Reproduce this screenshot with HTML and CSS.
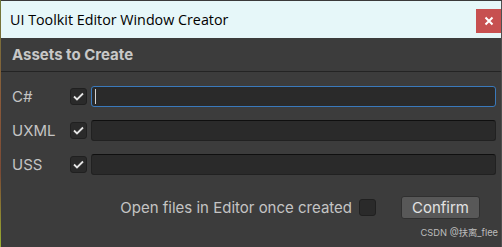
FILE: index.html
```html
<!DOCTYPE html>
<html lang="en">
<head>
    <meta charset="UTF-8">
    <title>UI Toolkit Editor Window Creator</title>
    <link rel="stylesheet" href="styles.css">
</head>
<body>
    <div class="desk">
        <div class="edge"></div>
        <div class="win">
            <div class="titlebar">
                <span class="title">UI Toolkit Editor Window Creator</span>
                <div class="close">
                    <svg width="10" height="10" viewBox="0 0 10 10">
                        <path d="M1.5 1.5 L8.5 8.5 M8.5 1.5 L1.5 8.5" stroke="#fff" stroke-width="2"/>
                    </svg>
                </div>
            </div>
            <div class="head">Assets to Create</div>
            <div class="rows">
                <div class="row">
                    <span class="lbl">C#</span>
                    <div class="chk on"><svg width="11" height="9" viewBox="0 0 11 9"><path d="M1 4.5 L4 7.5 L10 1.5" stroke="#e4e4e4" stroke-width="1.8" fill="none"/></svg></div>
                    <div class="field focus"><i class="caret"></i></div>
                </div>
                <div class="row">
                    <span class="lbl">UXML</span>
                    <div class="chk on"><svg width="11" height="9" viewBox="0 0 11 9"><path d="M1 4.5 L4 7.5 L10 1.5" stroke="#e4e4e4" stroke-width="1.8" fill="none"/></svg></div>
                    <div class="field"></div>
                </div>
                <div class="row">
                    <span class="lbl">USS</span>
                    <div class="chk on"><svg width="11" height="9" viewBox="0 0 11 9"><path d="M1 4.5 L4 7.5 L10 1.5" stroke="#e4e4e4" stroke-width="1.8" fill="none"/></svg></div>
                    <div class="field"></div>
                </div>
            </div>
            <div class="foot">
                <span class="opt">Open files in Editor once created</span>
                <div class="chk"></div>
                <button class="btn">Confirm</button>
            </div>
            <div class="mark">CSDN @扶离_flee</div>
        </div>
    </div>
</body>
</html>
```

FILE: styles.css
```css
body {
    margin: 0;
    background: #3a3a3a;
    font-family: Inter, "Noto Sans", "Noto Sans CJK SC", sans-serif;
}
.desk {
    display: flex;
    height: 247px;
    overflow: hidden;
}
.edge {
    width: 1px;
    background: linear-gradient(#6f7a3a, #8a5a3a 40%, #7a4a35 70%, #9ab030);
}
.win {
    flex: 1;
    display: flex;
    flex-direction: column;
    background: #3c3c3c;
    border-right: 1px solid #4f4f4f;
    margin-top: 1px;
}
.titlebar {
    height: 37px;
    background: #e6f7f9;
    display: flex;
    align-items: center;
    justify-content: space-between;
    padding-left: 9px;
}
.title {
    font-family: "Open Sans", sans-serif;
    font-size: 14.3px;
    color: #000;
}
.close {
    width: 25px;
    height: 24px;
    background: #c75050;
    display: flex;
    align-items: center;
    justify-content: center;
    align-self: flex-start;
    margin-top: 8px;
}
.head {
    height: 33px;
    line-height: 33px;
    border-bottom: 1px solid #242424;
    padding-left: 11px;
    font-size: 15px;
    font-weight: bold;
    color: #c8c8c8;
}
.rows {
    display: flex;
    flex-direction: column;
    gap: 13px;
    padding: 14px 5px 0 11px;
}
.row {
    display: flex;
    align-items: center;
    height: 21px;
}
.lbl {
    width: 58px;
    font-size: 15px;
    color: #c4c4c4;
}
.chk {
    width: 15px;
    height: 15px;
    background: #2a2a2a;
    border: 1px solid #202020;
    border-radius: 3px;
    display: flex;
    align-items: center;
    justify-content: center;
}
.field {
    flex: 1;
    height: 19px;
    margin-left: 4px;
    background: #2a2a2a;
    border: 1px solid #212121;
    border-top-color: #0f0f0f;
    border-radius: 3px;
    display: flex;
    align-items: center;
}
.field.focus {
    border-color: #3a79bb;
}
.caret {
    width: 1px;
    height: 15px;
    margin-left: 3px;
    background: #d2d2d2;
}
.foot {
    display: flex;
    align-items: center;
    justify-content: flex-end;
    padding: 21px 21px 0 0;
}
.opt {
    font-size: 15px;
    color: #c4c4c4;
    margin-right: 7px;
}
.btn {
    margin-left: 25px;
    width: 79px;
    height: 23px;
    background: #585858;
    border: 1px solid #303030;
    border-radius: 3px;
    color: #e2e2e2;
    font-family: Inter, "Noto Sans", sans-serif;
    font-size: 15px;
    padding: 0;
}
.mark {
    text-align: right;
    padding: 6px 3px 0 0;
    font-size: 9.3px;
    color: #bcbcbc;
}
```
